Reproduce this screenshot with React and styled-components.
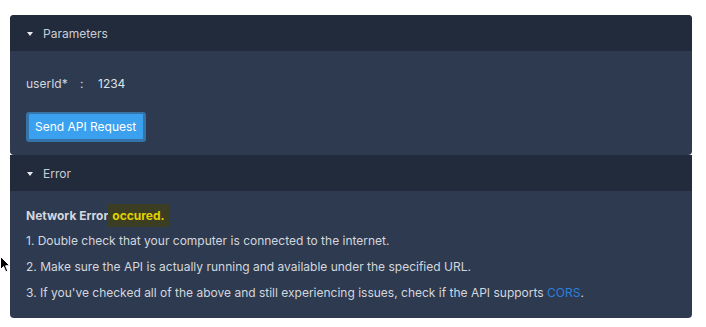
import React from "react";
import styled, { createGlobalStyle } from "styled-components";

const Global = createGlobalStyle`
  html, body { margin: 0; padding: 0; background: #ffffff; }
  body { font-family: Inter, "Noto Sans", sans-serif; -webkit-font-smoothing: antialiased; }
`;

const Page = styled.div`
  position: relative;
  width: 706px;
  height: 327px;
  box-sizing: border-box;
  padding: 15px 14px 0 10px;
`;

const Panel = styled.section`
  display: flex;
  flex-direction: column;
  overflow: hidden;
  border-radius: ${(p) => (p.$first ? "4px" : "0 0 4px 4px")};
  background: #2e3a50;
`;

const Header = styled.div`
  display: flex;
  align-items: center;
  gap: 10px;
  height: 36px;
  padding: 0 0 0 17px;
  background: #222b3c;
  color: #c9ced6;
  font-size: 12px;
`;

const Caret = styled.span`
  width: 0;
  height: 0;
  border-left: 3.5px solid transparent;
  border-right: 3.5px solid transparent;
  border-top: 4px solid #e6e9ee;
  margin-top: 1px;
`;

const Body = styled.div`
  display: flex;
  flex-direction: column;
  align-items: flex-start;
  padding: ${(p) => p.$pad};
  color: #d3d7de;
  font-size: 12px;
`;

const FieldRow = styled.div`
  display: flex;
  align-items: center;
  height: 24px;
`;

const FieldLabel = styled.span`
  width: 54px;
  color: #d3d7de;
`;

const FieldColon = styled.span`
  width: 18px;
`;

const FieldValue = styled.span`
  color: #dfe2e7;
`;

const SendButton = styled.button`
  margin-top: 17px;
  height: 30px;
  box-sizing: border-box;
  padding: 0 7px 0 6px;
  border-style: solid;
  border-color: #3574a8;
  border-width: 2px 3px 3px 3px;
  border-radius: 3px;
  background: #3ba1ef;
  color: #ffffff;
  font-family: Inter, "Noto Sans", sans-serif;
  font-size: 12px;
  line-height: 1;
  cursor: pointer;
`;

const Title = styled.div`
  height: 23px;
  display: flex;
  align-items: center;
  font-weight: 700;
  color: #d3d7de;
`;

const Highlight = styled.span`
  display: inline-flex;
  align-items: center;
  height: 23px;
  padding: 0 4px 0 4px;
  background: #3b3e22;
  color: #e2d100;
`;

const Line = styled.div`
  height: 26px;
  display: flex;
  align-items: center;
  white-space: pre;
`;

const Link = styled.a`
  color: #2d7fdc;
  text-decoration: none;
`;

const Cursor = styled.svg`
  position: absolute;
  left: 0;
  top: 256px;
`;

export default function App() {
  return (
    <>
      <Global />
      <Page>
        <Panel $first>
          <Header>
            <Caret />
            Parameters
          </Header>
          <Body $pad="20px 16px 13px">
            <FieldRow>
              <FieldLabel>userId*</FieldLabel>
              <FieldColon>:</FieldColon>
              <FieldValue>1234</FieldValue>
            </FieldRow>
            <SendButton>Send API Request</SendButton>
          </Body>
        </Panel>
        <Panel>
          <Header>
            <Caret />
            Error
          </Header>
          <Body $pad="13px 16px 13px">
            <Title>
              Network Error<Highlight>occured.</Highlight>
            </Title>
            <Line>1. Double check that your computer is connected to the internet.</Line>
            <Line>2. Make sure the API is actually running and available under the specified URL.</Line>
            <Line>
              3. If you've checked all of the above and still experiencing issues, check if the API supports{" "}
              <Link href="#">CORS</Link>.
            </Line>
          </Body>
        </Panel>
        <Cursor width="11" height="17" viewBox="0 0 11 17">
          <path d="M0.5 0.5 L0.5 13.5 L3.5 10.5 L5.8 15.8 L7.8 15 L5.6 9.8 L9.8 9.8 Z" fill="#000" stroke="#fff" strokeWidth="1" />
        </Cursor>
      </Page>
    </>
  );
}
